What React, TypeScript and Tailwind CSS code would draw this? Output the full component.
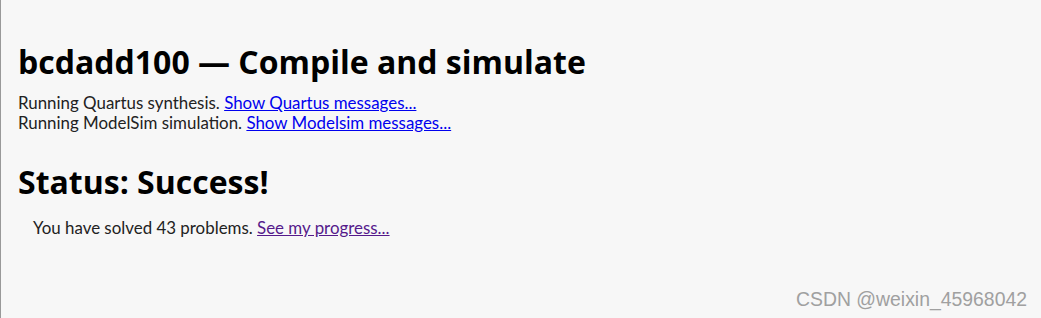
export default function App() {
  return (
    <div className="min-h-[318px] bg-[#f7f7f7] border-l border-[#999999] relative text-[#222]">
      <div className="px-[17px] pt-[40px]">
        <h1 className="font-['Open_Sans',sans-serif] font-bold text-[32px] leading-[44px] text-black">
          bcdadd100 — Compile and simulate
        </h1>
        <div className="mt-[9px] font-['Lato',sans-serif] text-[16.9px] leading-[20px] text-[#222]">
          <div>
            Running Quartus synthesis.{' '}
            <a href="#" className="text-[#0000ee] underline">Show Quartus messages...</a>
          </div>
          <div>
            Running ModelSim simulation.{' '}
            <a href="#" className="text-[#0000ee] underline">Show Modelsim messages...</a>
          </div>
        </div>
        <h2 className="mt-[28px] font-['Open_Sans',sans-serif] font-bold text-[32px] leading-[42px] text-black">
          Status: Success!
        </h2>
        <p className="mt-[15px] pl-[15px] font-['Lato',sans-serif] text-[16.9px] leading-[20px] text-[#222]">
          You have solved 43 problems.{' '}
          <a href="#" className="text-[#551a8b] underline">See my progress...</a>
        </p>
      </div>
      <div className="absolute right-[14px] bottom-[7px] font-['Liberation_Sans',sans-serif] text-[19.4px] leading-[24px] text-[#a0a0a0]">
        CSDN @weixin_45968042
      </div>
    </div>
  );
}
